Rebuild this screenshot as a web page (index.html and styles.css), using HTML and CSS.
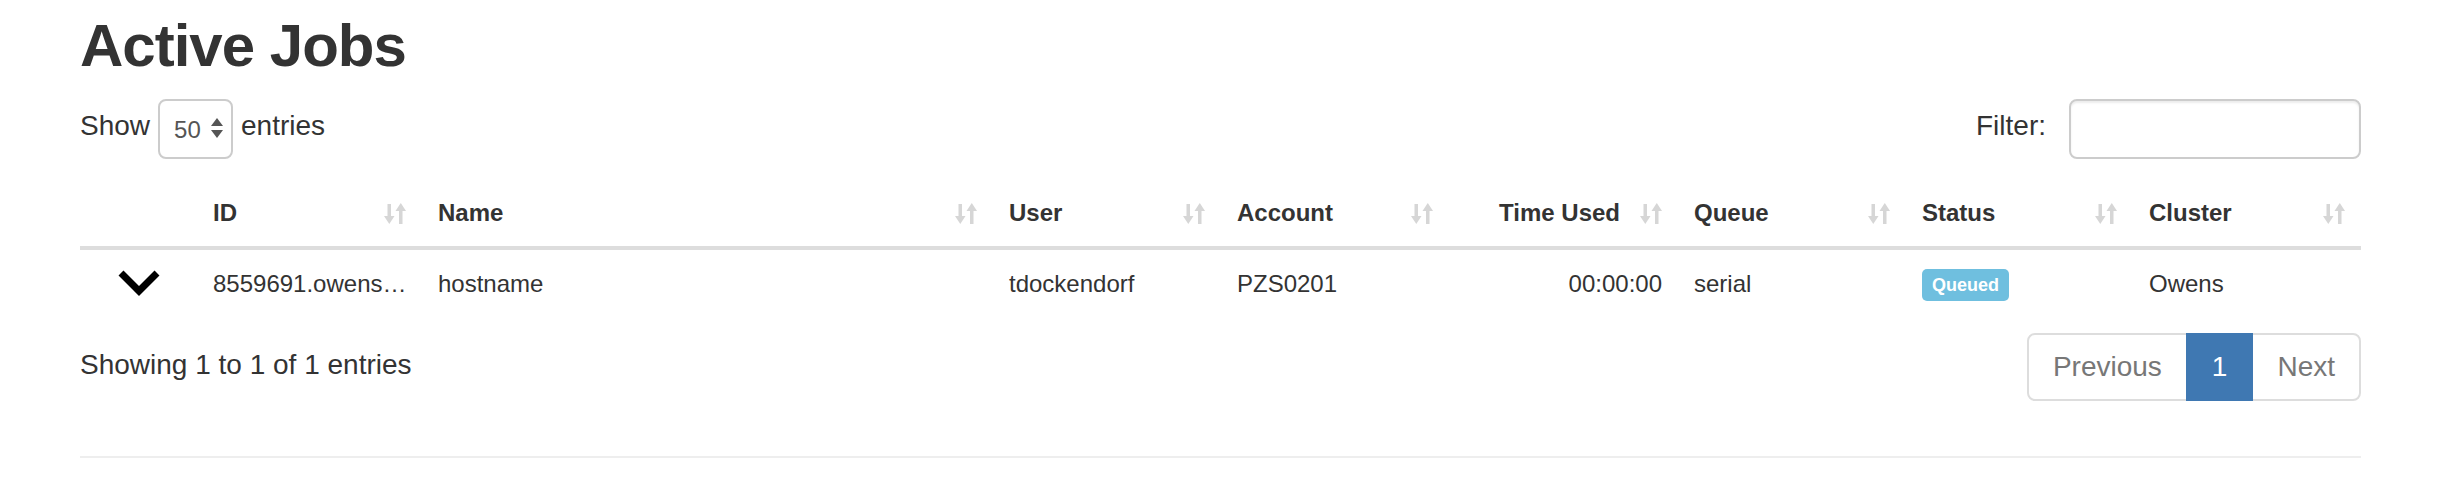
FILE: index.html
```html
<!DOCTYPE html>
<html lang="en">
<head>
<meta charset="utf-8">
<title>Active Jobs</title>
<link rel="stylesheet" href="styles.css">
</head>
<body>
<div class="page">
  <h2 class="title">Active Jobs</h2>

  <div class="dt-top">
    <div class="dt-length">
      <span class="lbl">Show</span>
      <span class="select-wrap">
        <select class="select-sm" aria-label="entries per page"><option>50</option></select>
        <svg class="select-arrows" viewBox="0 0 12 20" width="12" height="20" aria-hidden="true"><polygon points="6,0 12,8 0,8"/><polygon points="0,12 12,12 6,20"/></svg>
      </span>
      <span class="lbl">entries</span>
    </div>
    <div class="dt-filter">
      <label class="lbl" for="filter">Filter:</label>
      <input id="filter" class="input-sm" type="search">
    </div>
  </div>

  <table class="jobs">
    <colgroup>
      <col class="c-toggle"><col class="c-id"><col class="c-name"><col class="c-std"><col class="c-std"><col class="c-time"><col class="c-queue"><col class="c-status"><col class="c-std">
    </colgroup>
    <thead>
      <tr>
        <th></th>
        <th><div class="th-in"><span>ID</span><svg class="sort" viewBox="0 0 22 21" width="22" height="21" aria-hidden="true"><rect x="3.5" y="1" width="3.5" height="13"/><polygon points="0,13 10.5,13 5.25,21"/><polygon points="11.5,8 22,8 16.75,0"/><rect x="15" y="7" width="3.5" height="14"/></svg></div></th>
        <th><div class="th-in"><span>Name</span><svg class="sort" viewBox="0 0 22 21" width="22" height="21" aria-hidden="true"><rect x="3.5" y="1" width="3.5" height="13"/><polygon points="0,13 10.5,13 5.25,21"/><polygon points="11.5,8 22,8 16.75,0"/><rect x="15" y="7" width="3.5" height="14"/></svg></div></th>
        <th><div class="th-in"><span>User</span><svg class="sort" viewBox="0 0 22 21" width="22" height="21" aria-hidden="true"><rect x="3.5" y="1" width="3.5" height="13"/><polygon points="0,13 10.5,13 5.25,21"/><polygon points="11.5,8 22,8 16.75,0"/><rect x="15" y="7" width="3.5" height="14"/></svg></div></th>
        <th><div class="th-in"><span>Account</span><svg class="sort" viewBox="0 0 22 21" width="22" height="21" aria-hidden="true"><rect x="3.5" y="1" width="3.5" height="13"/><polygon points="0,13 10.5,13 5.25,21"/><polygon points="11.5,8 22,8 16.75,0"/><rect x="15" y="7" width="3.5" height="14"/></svg></div></th>
        <th><div class="th-in th-right"><span>Time Used</span><svg class="sort" viewBox="0 0 22 21" width="22" height="21" aria-hidden="true"><rect x="3.5" y="1" width="3.5" height="13"/><polygon points="0,13 10.5,13 5.25,21"/><polygon points="11.5,8 22,8 16.75,0"/><rect x="15" y="7" width="3.5" height="14"/></svg></div></th>
        <th><div class="th-in"><span>Queue</span><svg class="sort" viewBox="0 0 22 21" width="22" height="21" aria-hidden="true"><rect x="3.5" y="1" width="3.5" height="13"/><polygon points="0,13 10.5,13 5.25,21"/><polygon points="11.5,8 22,8 16.75,0"/><rect x="15" y="7" width="3.5" height="14"/></svg></div></th>
        <th><div class="th-in"><span>Status</span><svg class="sort" viewBox="0 0 22 21" width="22" height="21" aria-hidden="true"><rect x="3.5" y="1" width="3.5" height="13"/><polygon points="0,13 10.5,13 5.25,21"/><polygon points="11.5,8 22,8 16.75,0"/><rect x="15" y="7" width="3.5" height="14"/></svg></div></th>
        <th><div class="th-in"><span>Cluster</span><svg class="sort" viewBox="0 0 22 21" width="22" height="21" aria-hidden="true"><rect x="3.5" y="1" width="3.5" height="13"/><polygon points="0,13 10.5,13 5.25,21"/><polygon points="11.5,8 22,8 16.75,0"/><rect x="15" y="7" width="3.5" height="14"/></svg></div></th>
      </tr>
    </thead>
    <tbody>
      <tr>
        <td class="toggle"><svg class="chev" viewBox="0 0 42 27" width="42" height="27" aria-hidden="true"><polyline points="3,3 21,21 39,3"/></svg></td>
        <td class="idcell" title="8559691.owens.osc.edu">8559691.owens…</td>
        <td>hostname</td>
        <td>tdockendorf</td>
        <td>PZS0201</td>
        <td class="num">00:00:00</td>
        <td>serial</td>
        <td><span class="label-info">Queued</span></td>
        <td>Owens</td>
      </tr>
    </tbody>
  </table>

  <div class="dt-bottom">
    <div class="dt-info">Showing 1 to 1 of 1 entries</div>
    <ul class="pagination">
      <li class="disabled"><a>Previous</a></li>
      <li class="active"><a>1</a></li>
      <li class="disabled"><a>Next</a></li>
    </ul>
  </div>

  <hr class="divider">
</div>
</body>
</html>
```

FILE: styles.css
```css
html, body {
  margin: 0;
  background: #fff;
}

body {
  font-family: "Liberation Sans", Arial, Helvetica, sans-serif;
  color: #333;
  font-size: 28px;
  line-height: 40px;
}

.page {
  padding: 13px 91px 0 80px;
}

.title {
  margin: 0 0 20px;
  font-size: 60px;
  line-height: 66px;
  font-weight: 700;
  letter-spacing: -1px;
  color: #333;
}

/* top controls */
.dt-top {
  display: flex;
  justify-content: space-between;
  align-items: center;
  height: 60px;
}

.dt-length,
.dt-filter {
  display: flex;
  align-items: center;
}

.dt-length {
  gap: 8px;
}

.lbl {
  font-size: 28px;
  line-height: 40px;
  padding-bottom: 6px;
  font-weight: 400;
}

.select-wrap {
  position: relative;
  display: block;
  width: 75px;
  height: 60px;
}

.select-sm {
  -webkit-appearance: none;
  appearance: none;
  box-sizing: border-box;
  width: 75px;
  height: 60px;
  margin: 0;
  padding: 0 0 0 14px;
  border: 2px solid #ccc;
  border-radius: 8px;
  background: #fff;
  font-family: "Liberation Sans", Arial, sans-serif;
  font-size: 24px;
  color: #555;
}

.select-arrows {
  position: absolute;
  left: 53px;
  top: 19px;
  fill: #555;
  pointer-events: none;
}

.input-sm {
  box-sizing: border-box;
  width: 292px;
  height: 60px;
  margin: 0 0 0 23px;
  padding: 0 14px;
  border: 2px solid #ccc;
  border-radius: 8px;
  background: #fff;
  box-shadow: inset 0 2px 2px rgba(0, 0, 0, 0.075);
  font-family: "Liberation Sans", Arial, sans-serif;
  font-size: 24px;
  color: #555;
  outline: none;
}

/* table */
.jobs {
  width: 2281px;
  table-layout: fixed;
  border-collapse: collapse;
  margin: 21px 0 12px;
  font-size: 24px;
  line-height: 34px;
}

.c-toggle { width: 117px; }
.c-id { width: 225px; }
.c-name { width: 571px; }
.c-std { width: 228px; }
.c-time { width: 229px; }
.c-queue { width: 228px; }
.c-status { width: 227px; }

.jobs th {
  padding: 16px;
  text-align: left;
  vertical-align: bottom;
  font-weight: 700;
  color: #333;
  border-bottom: 4px solid #ddd;
}

.th-in {
  display: flex;
  align-items: center;
  justify-content: space-between;
  white-space: nowrap;
}

.th-right {
  justify-content: flex-end;
  gap: 20px;
}

.sort {
  display: block;
  flex: none;
  fill: #d6d6d6;
}

.jobs td {
  padding: 16px;
  vertical-align: middle;
  color: #333;
}

.chev {
  display: block;
  margin: 0 auto;
  fill: none;
  stroke: #000;
  stroke-width: 7;
  stroke-linejoin: miter;
}

.jobs td.idcell {
  padding-right: 8px;
  white-space: nowrap;
  overflow: hidden;
}

.jobs td.num {
  text-align: right;
}

.label-info {
  display: inline-block;
  padding: 7px 10px;
  font-size: 18px;
  line-height: 18px;
  font-weight: 700;
  color: #fff;
  background: #6fbfdf;
  border-radius: 5px;
  white-space: nowrap;
}

/* bottom controls */
.dt-bottom {
  display: flex;
  justify-content: space-between;
  align-items: flex-start;
}

.dt-info {
  padding-top: 16px;
  font-size: 28px;
  line-height: 40px;
  white-space: nowrap;
}

.pagination {
  display: flex;
  list-style: none;
  margin: 4px 0;
  padding: 0;
}

.pagination li a {
  display: block;
  padding: 12px 24px;
  margin-left: -2px;
  font-size: 28px;
  line-height: 40px;
  border: 2px solid #ddd;
  background: #fff;
  color: #337ab7;
  text-decoration: none;
}

.pagination li:first-child a {
  margin-left: 0;
  border-radius: 8px 0 0 8px;
}

.pagination li:last-child a {
  border-radius: 0 8px 8px 0;
}

.pagination li.disabled a {
  color: #777;
}

.pagination li.active a {
  position: relative;
  z-index: 2;
  color: #fff;
  background: #3f78b2;
  border-color: #3f78b2;
}

.divider {
  margin: 51px 0 0;
  border: 0;
  border-top: 2px solid #eee;
  height: 0;
}
```
